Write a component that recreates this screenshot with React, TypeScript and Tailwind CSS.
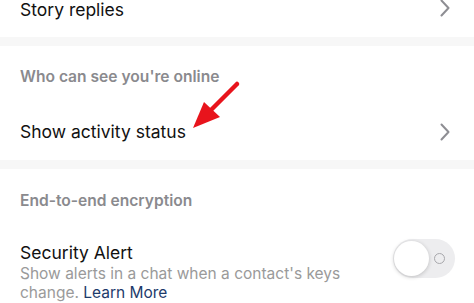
import React from "react";

const Chevron = () => (
  <svg width="10" height="18" viewBox="0 0 10 18" fill="none">
    <path d="M1.5 1.5 L8.5 9 L1.5 16.5" stroke="#8e8e93" strokeWidth="2" strokeLinecap="round" strokeLinejoin="round" />
  </svg>
);

export default function App() {
  return (
    <div className="relative w-[474px] h-[303px] overflow-hidden bg-white" style={{ fontFamily: "Inter, 'Liberation Sans', sans-serif" }}>
      {/* Story replies row (cropped at top) */}
      <div className="h-[37px] pl-5 pr-6 flex justify-between items-start">
        <span className="text-[17.5px] leading-[20px] text-[#111]">Story replies</span>
        <div className="mt-[-1px]"><Chevron /></div>
      </div>
      <div className="h-[9px] bg-[#f7f7f7]" />

      {/* Who can see you're online */}
      <div className="pl-5 pt-[21px] pb-[17px]">
        <div className="text-[15.6px] leading-[20px] font-semibold text-[#8a8a8e]">Who can see you're online</div>
      </div>
      <div className="h-[56px] pl-5 pr-6 flex justify-between items-center">
        <span className="text-[17.5px] leading-[24px] text-[#111]">Show activity status</span>
        <Chevron />
      </div>
      <div className="h-[9px] bg-[#f7f7f7]" />

      {/* End-to-end encryption */}
      <div className="pl-5 pt-[22px]">
        <div className="text-[15.6px] leading-[20px] font-semibold text-[#8a8a8e]">End-to-end encryption</div>
      </div>
      <div className="pl-5 pr-[19px] pt-[31px] flex justify-between items-start">
        <div className="w-[350px]">
          <div className="text-[17.5px] leading-[22px] text-[#111]">Security Alert</div>
          <p className="text-[15.5px] leading-[19px] text-[#9a9a9a]">
            Show alerts in a chat when a contact's keys change. <span className="text-[#1d3a6b]">Learn More</span>
          </p>
        </div>
        <div className="relative w-[62px] h-[39px] mt-[-3px] rounded-full bg-[#ededef]">
          <div className="absolute left-[1px] top-[2px] w-[35px] h-[35px] rounded-full bg-white shadow-[0_1px_4px_rgba(0,0,0,0.2)]" />
          <div className="absolute left-[41px] top-[14px] w-[11px] h-[11px] rounded-full border-[1.5px] border-[#a8a8ac]" />
        </div>
      </div>

      {/* Red annotation arrow */}
      <svg className="absolute left-0 top-0 pointer-events-none" width="474" height="303" viewBox="0 0 474 303">
        <line x1="237" y1="84" x2="209" y2="112" stroke="#e8141c" strokeWidth="4.5" strokeLinecap="round" />
        <polygon points="193,128 204,102 220,117" fill="#e8141c" />
      </svg>
    </div>
  );
}
